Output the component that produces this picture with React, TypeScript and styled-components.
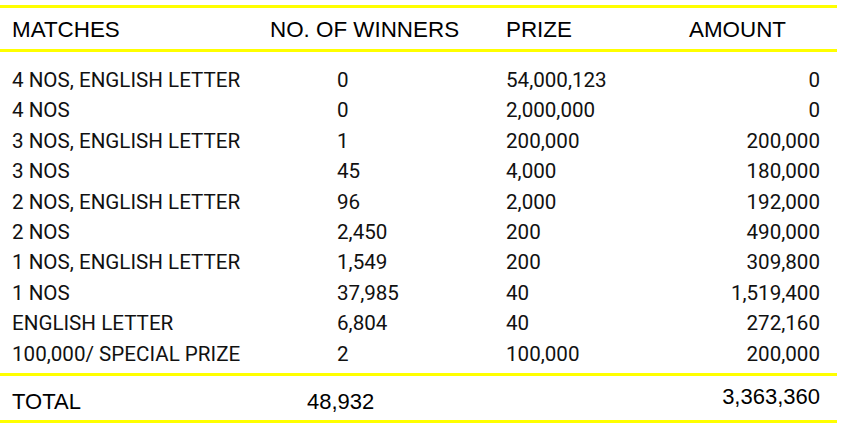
import React from 'react';
import styled, { createGlobalStyle } from 'styled-components';

const GlobalStyle = createGlobalStyle`
	html, body {
		margin: 0;
		padding: 0;
		background: #ffffff;
	}
`;

const YELLOW = '#ffff00';

const Page = styled.div`
	padding-top: 5px;
	width: 837px;
`;

const Grid = styled.div`
	display: grid;
	grid-template-columns: 258px 236px 183px 148px;
	padding-left: 12px;
	align-items: center;
`;

const HeaderRow = styled(Grid)`
	border-top: 3px solid ${YELLOW};
	border-bottom: 3px solid ${YELLOW};
	height: 38px;
	padding-top: 3px;
	font-family: 'Liberation Sans', Arial, sans-serif;
	font-size: 22.4px;
	color: #000;
`;

const Body = styled.div`
	padding: 13px 0 4px;
	font-family: Roboto, 'Liberation Sans', sans-serif;
	font-size: 20.6px;
	color: #111;
`;

const DataRow = styled(Grid)`
	height: 30.4px;
	line-height: 30.4px;
`;

const TotalRow = styled(Grid)`
	border-top: 3px solid ${YELLOW};
	border-bottom: 3px solid ${YELLOW};
	height: 36px;
	padding-top: 8px;
	font-family: 'Liberation Sans', Arial, sans-serif;
	font-size: 22px;
	color: #000;
`;

const Cell = styled.div<{ $indent?: number; $right?: boolean; $raise?: number }>`
	white-space: nowrap;
	padding-left: ${p => p.$indent ?? 0}px;
	text-align: ${p => (p.$right ? 'right' : 'left')};
	padding-right: ${p => (p.$right ? 17 : 0)}px;
	margin-bottom: ${p => (p.$raise ?? 0) * 2}px;
`;

const rows = [
	['4 NOS, ENGLISH LETTER', '0', '54,000,123', '0'],
	['4 NOS', '0', '2,000,000', '0'],
	['3 NOS, ENGLISH LETTER', '1', '200,000', '200,000'],
	['3 NOS', '45', '4,000', '180,000'],
	['2 NOS, ENGLISH LETTER', '96', '2,000', '192,000'],
	['2 NOS', '2,450', '200', '490,000'],
	['1 NOS, ENGLISH LETTER', '1,549', '200', '309,800'],
	['1 NOS', '37,985', '40', '1,519,400'],
	['ENGLISH LETTER', '6,804', '40', '272,160'],
	['100,000/ SPECIAL PRIZE', '2', '100,000', '200,000'],
];

export default function App() {
	return (
		<Page>
			<GlobalStyle />
			<HeaderRow>
				<Cell>MATCHES</Cell>
				<Cell>NO. OF WINNERS</Cell>
				<Cell>PRIZE</Cell>
				<Cell>AMOUNT</Cell>
			</HeaderRow>
			<Body>
				{rows.map(([match, winners, prize, amount]) => (
					<DataRow key={match}>
						<Cell>{match}</Cell>
						<Cell $indent={67}>{winners}</Cell>
						<Cell>{prize}</Cell>
						<Cell $right>{amount}</Cell>
					</DataRow>
				))}
			</Body>
			<TotalRow>
				<Cell>TOTAL</Cell>
				<Cell $indent={37}>48,932</Cell>
				<Cell />
				<Cell $right $raise={5}>3,363,360</Cell>
			</TotalRow>
		</Page>
	);
}
